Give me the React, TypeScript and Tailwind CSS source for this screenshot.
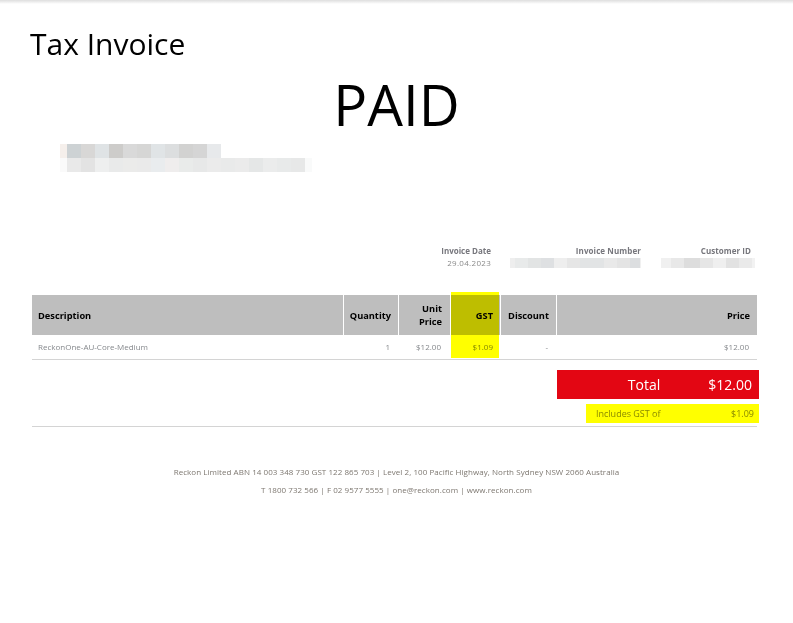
const line1 = ["bg-[#f5efeb] w-[7px]", "bg-[#cdd2d4] w-[14px]", "bg-[#d8d7d6] w-[14px]", "bg-[#dfe3e5] w-[14px]", "bg-[#cdccca] w-[14px]", "bg-[#d9d9d9] w-[14px]", "bg-[#d6d6d5] w-[14px]", "bg-[#e0e4e6] w-[14px]", "bg-[#dcdedf] w-[14px]", "bg-[#d2d2d1] w-[14px]", "bg-[#d5d5d5] w-[14px]", "bg-[#e7e9eb] w-[14px]"];
const line2 = ["bg-[#fafafa] w-[7px]", "bg-[#e9e9e9] w-[14px]", "bg-[#e3e3e3] w-[14px]", "bg-[#eeefef] w-[14px]", "bg-[#e9eaea] w-[14px]", "bg-[#ebebea] w-[14px]", "bg-[#eaeaea] w-[14px]", "bg-[#e9ecee] w-[14px]", "bg-[#efeded] w-[14px]", "bg-[#e9ebea] w-[14px]", "bg-[#e7e8e8] w-[14px]", "bg-[#ebebeb] w-[14px]", "bg-[#e9eaea] w-[14px]", "bg-[#ebebeb] w-[14px]", "bg-[#e5e7e7] w-[14px]", "bg-[#ebecec] w-[14px]", "bg-[#e8eaea] w-[14px]", "bg-[#e7e8e8] w-[14px]", "bg-[#f9fafa] w-[7px]"];
const invoiceNo = ["bg-[#eeeeee] w-[5px]", "bg-[#e8eaea] w-[13px]", "bg-[#e2e4e4] w-[13px]", "bg-[#dee0e2] w-[13px]", "bg-[#eeeeee] w-[13px]", "bg-[#e6e6e6] w-[13px]", "bg-[#e2e4e5] w-[24px]", "bg-[#e9e9e9] w-[13px]", "bg-[#e4e4e4] w-[13px]", "bg-[#dcdee0] w-[10px]", "bg-[#f0f0f0] w-[1px]"];
const customerId = ["bg-[#f0f0f0] w-[10px]", "bg-[#e8e8e8] w-[13px]", "bg-[#dddddd] w-[16px]", "bg-[#e6e6e6] w-[13px]", "bg-[#efefef] w-[13px]", "bg-[#e2e2e2] w-[13px]", "bg-[#eaeaea] w-[13px]", "bg-[#f2f2f2] w-[3px]"];

const Blur = ({ cells, className }: { cells: string[]; className: string }) => (
  <div className="flex">
    {cells.map((c, i) => <div key={i} className={`${c} ${className}`} />)}
  </div>
);

const Th = ({ className, children }: { className: string; children: React.ReactNode }) => (
  <div className={`flex items-center bg-[#bebebe] text-[9.25px] leading-[13px] font-bold text-black ${className}`}>{children}</div>
);

const Td = ({ className, children }: { className: string; children: React.ReactNode }) => (
  <div className={`text-[8px] leading-[24px] text-[#85888c] ${className}`}>{children}</div>
);

export default function App() {
  return (
    <div className="relative h-[623px] w-[793px] overflow-hidden bg-white font-['Open_Sans',sans-serif]">
      <div className="h-[4px] bg-gradient-to-b from-[#dedede] to-white" />

      <h1 className="pl-[30px] pt-[19px] text-[30px] leading-[42px] text-black">Tax Invoice</h1>

      <div className="text-center text-[56.5px] leading-[80px] text-black">PAID</div>

      <div className="ml-[60px] mt-[-1px]">
        <Blur cells={line1} className="h-[14px]" />
        <Blur cells={line2} className="h-[14px]" />
      </div>

      <div className="mt-[73px] flex pr-[42px] text-right text-[8px] leading-[12px]">
        <div className="w-[491px]">
          <div className="font-bold text-[#77777d]">Invoice Date</div>
          <div className="tracking-[0.3px] text-[#8a8a8a]">29.04.2023</div>
        </div>
        <div className="w-[150px]">
          <div className="font-bold tracking-[0.1px] text-[#77777d]">Invoice Number</div>
          <div className="mt-[1px] flex justify-end"><Blur cells={invoiceNo} className="h-[10px]" /></div>
        </div>
        <div className="w-[110px]">
          <div className="font-bold tracking-[0.05px] text-[#77777d]">Customer ID</div>
          <div className="mr-[-4px] mt-[1px] flex justify-end"><Blur cells={customerId} className="h-[10px]" /></div>
        </div>
      </div>

      <div className="relative ml-[32px] mt-[26px] w-[725px]">
        <div className="flex h-[40px] gap-px">
          <Th className="w-[311px] pl-[6px]">Description</Th>
          <Th className="w-[54px] justify-end pr-[7px]">Quantity</Th>
          <Th className="w-[51px] justify-end pr-[8px] text-right">Unit<br />Price</Th>
          <Th className="w-[49px] justify-end pr-[7px]">GST</Th>
          <Th className="w-[55px] justify-center">Discount</Th>
          <Th className="flex-1 justify-end pr-[7px]">Price</Th>
        </div>
        <div className="flex gap-px border-b border-[#d4d4d4]">
          <Td className="w-[311px] pl-[6px]">ReckonOne-AU-Core-Medium</Td>
          <Td className="w-[54px] pr-[8px] text-right">1</Td>
          <Td className="w-[51px] pr-[9px] text-right">$12.00</Td>
          <Td className="w-[49px] pr-[7px] text-right">$1.09</Td>
          <Td className="w-[55px] pr-[8px] text-right">-</Td>
          <Td className="flex-1 pr-[8px] text-right">$12.00</Td>
        </div>
        <div className="absolute left-[419px] top-[-3px] h-[66px] w-[48px] bg-[#ffff00] mix-blend-multiply" />
      </div>

      <div className="ml-[557px] mt-[10px] flex h-[29px] w-[202px] items-center justify-end bg-[#e30613] pr-[7px] text-[14px] text-white">
        <span>Total</span>
        <span className="ml-[48px]">$12.00</span>
      </div>

      <div className="ml-[586px] mt-[5px] flex h-[19px] w-[173px] items-center justify-between bg-[#ffff00] pl-[10px] pr-[5px] text-[9px] text-[#8a8a00]">
        <span>Includes GST of</span>
        <span>$1.09</span>
      </div>

      <div className="ml-[32px] mt-[3px] w-[725px] border-b border-[#d4d4d4]" />

      <div className="mt-[36px] text-center text-[8px] leading-[18px] tracking-[0.05px] text-[#7d7770]">
        <div>Reckon Limited ABN 14 003 348 730 GST 122 865 703 | Level 2, 100 Pacific Highway, North Sydney NSW 2060 Australia</div>
        <div>T 1800 732 566 | F 02 9577 5555 | one@reckon.com | www.reckon.com</div>
      </div>
    </div>
  );
}
